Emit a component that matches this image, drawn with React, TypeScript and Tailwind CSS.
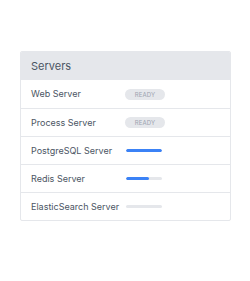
import React from "react";

const rows: { name: string; kind: "ready" | "bar"; pct?: number }[] = [
  { name: "Web Server", kind: "ready" },
  { name: "Process Server", kind: "ready" },
  { name: "PostgreSQL Server", kind: "bar", pct: 100 },
  { name: "Redis Server", kind: "bar", pct: 64 },
  { name: "ElasticSearch Server", kind: "bar", pct: 0 },
];

export default function App() {
  return (
    <div className="w-[250px] h-[281px] bg-white pt-[51px] pl-[20px]" style={{ fontFamily: "Inter, 'Noto Sans', sans-serif" }}>
      <div className="w-[211px] border border-[#e5e7eb] rounded-[2px] overflow-hidden">
        <div className="h-[28px] bg-[#e5e7eb] flex items-center pl-[10px] text-[11px] text-[#4b5563]">Servers</div>
        {rows.map((r, i) => (
          <div key={r.name} className={`h-[28px] flex items-center pl-[10px] ${i > 0 ? "border-t border-[#e5e7eb]" : ""}`}>
            <div className="w-[94px] text-[9px] text-[#4b5563] whitespace-nowrap">{r.name}</div>
            {r.kind === "ready" ? (
              <div className="w-[40px] h-[11px] rounded-full bg-[#e5e7eb] flex items-center justify-center text-[6px] text-[#9ca3af] tracking-[0.02em]">READY</div>
            ) : (
              <div className="ml-[1px] w-[36px] h-[3px] rounded-full bg-[#e5e7eb] overflow-hidden">
                <div className="h-full bg-[#3b82f6] rounded-full" style={{ width: `${r.pct}%` }} />
              </div>
            )}
          </div>
        ))}
      </div>
    </div>
  );
}
